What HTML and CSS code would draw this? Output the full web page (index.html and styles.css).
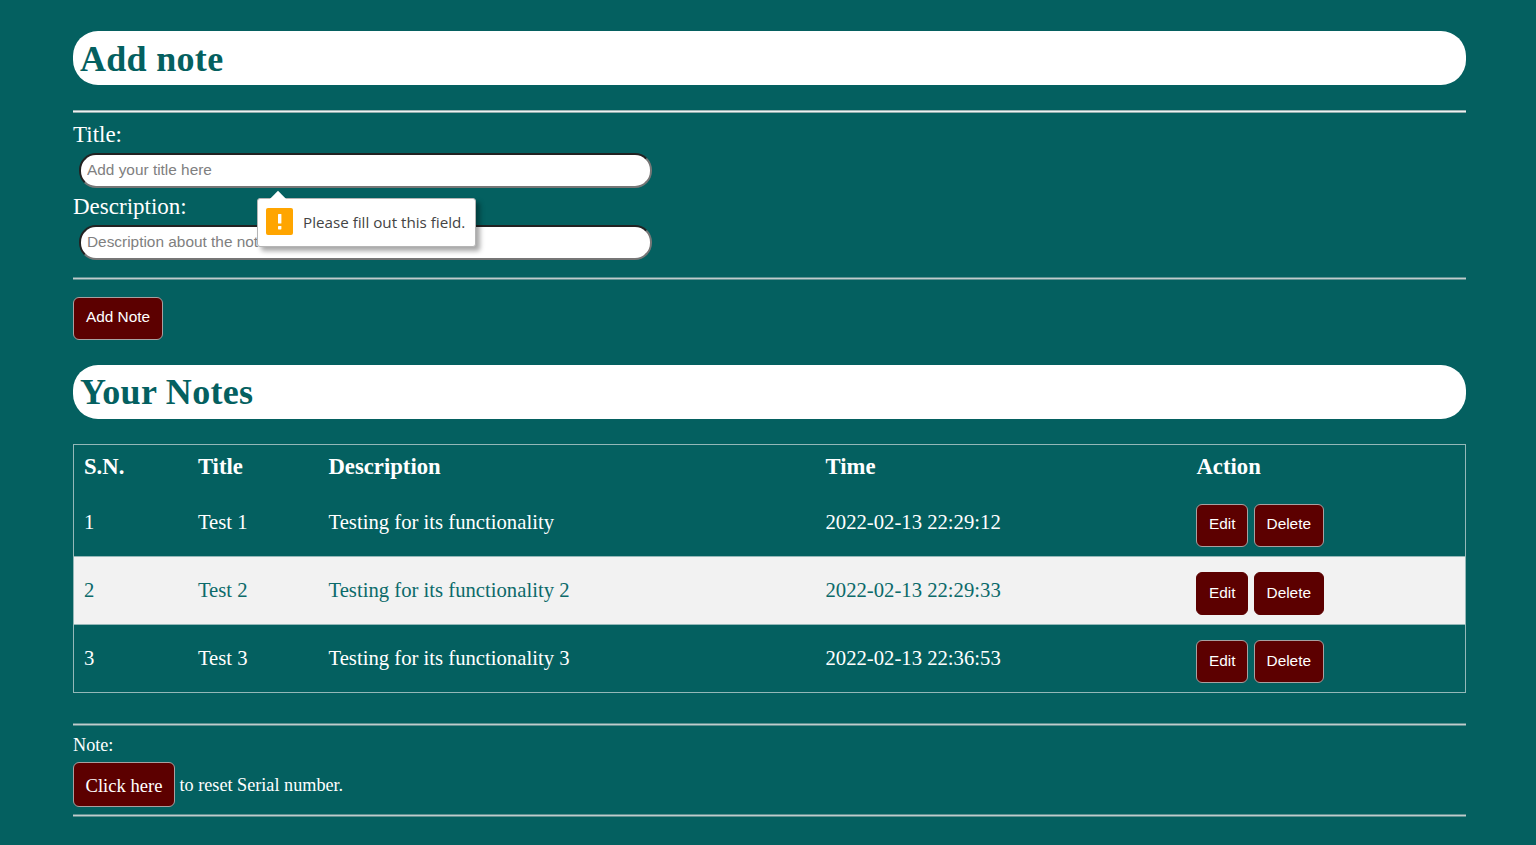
FILE: index.html
```html
<!DOCTYPE html>
<html lang="en">
<head>
<meta charset="utf-8">
<title>Notes</title>
<link rel="stylesheet" href="styles.css">
</head>
<body>
<main class="page">
  <h1 class="banner">Add note</h1>
  <hr class="rule rule-top">
  <form class="note-form">
    <label class="field-label" for="title">Title:</label>
    <div class="field-wrap">
      <input class="field" id="title" type="text" placeholder="Add your title here">
      <div class="tooltip">
        <span class="tooltip-arrow"></span>
        <svg class="tooltip-icon" width="27" height="27" viewBox="0 0 27 27" aria-hidden="true">
          <rect width="27" height="27" rx="2" fill="#ffa500"/>
          <rect x="12" y="6" width="3.4" height="9.5" rx="0.6" fill="#fff"/>
          <rect x="12" y="18" width="3.4" height="3.4" rx="0.6" fill="#fff"/>
        </svg>
        <span class="tooltip-text">Please fill out this field.</span>
      </div>
    </div>
    <label class="field-label" for="desc">Description:</label>
    <div class="field-wrap">
      <input class="field" id="desc" type="text" placeholder="Description about the note">
    </div>
    <hr class="rule rule-form">
    <button class="btn btn-add" type="button">Add Note</button>
  </form>
  <h1 class="banner banner-notes">Your Notes</h1>
  <table class="notes">
    <colgroup>
      <col class="c-sn"><col class="c-title"><col class="c-desc"><col class="c-time"><col class="c-action">
    </colgroup>
    <thead>
      <tr class="head-row"><th>S.N.</th><th>Title</th><th>Description</th><th>Time</th><th>Action</th></tr>
    </thead>
    <tbody>
      <tr><td>1</td><td>Test 1</td><td>Testing for its functionality</td><td>2022-02-13 22:29:12</td>
        <td class="actions"><button class="btn btn-row" type="button">Edit</button><button class="btn btn-row" type="button">Delete</button></td></tr>
      <tr class="alt"><td>2</td><td>Test 2</td><td>Testing for its functionality 2</td><td>2022-02-13 22:29:33</td>
        <td class="actions"><button class="btn btn-row" type="button">Edit</button><button class="btn btn-row" type="button">Delete</button></td></tr>
      <tr><td>3</td><td>Test 3</td><td>Testing for its functionality 3</td><td>2022-02-13 22:36:53</td>
        <td class="actions"><button class="btn btn-row" type="button">Edit</button><button class="btn btn-row" type="button">Delete</button></td></tr>
    </tbody>
  </table>
  <hr class="rule rule-note">
  <p class="note-label">Note:</p>
  <p class="note-line"><button class="btn btn-reset" type="button">Click here</button><span class="note-tail">to reset Serial number.</span></p>
  <hr class="rule rule-end">
</main>
</body>
</html>
```
FILE: styles.css
```css
* { box-sizing: border-box; }
html, body { margin: 0; padding: 0; }
body {
  background: #046060;
  color: #fff;
  font-family: "Liberation Serif", "Times New Roman", serif;
  height: 845px;
  overflow: hidden;
}
.page { margin: 0 70px 0 73px; padding-top: 31px; }
.banner {
  margin: 0;
  height: 54px;
  background: #fff;
  color: #046060;
  border-radius: 25px;
  padding-left: 7px;
  font-size: 36px;
  line-height: 56px;
  font-weight: 700;
  letter-spacing: 0.3px;
}
.rule {
  display: block;
  margin: 0;
  height: 3px;
  border: 0;
  border-top: 1px solid #5f9292;
  border-bottom: 1px solid #5f9292;
  background: #c0cccc;
}
.rule-top {
  margin-top: 25px;
  border-top-color: #9db3b3;
  border-bottom-color: #8fabab;
  background: #eef2f2;
}
.field-label {
  display: block;
  font-size: 23px;
  line-height: 25px;
  color: #fff;
}
.note-form { padding-top: 9px; }
.field-wrap { position: relative; margin: 6px 0 6px 6px; width: 573px; height: 35px; }
.field {
  display: block;
  width: 573px;
  height: 35px;
  padding: 0 6px 1px;
  border: 2px solid #767676;
  border-top-color: #222;
  border-left-color: #222;
  border-radius: 17px;
  background: #fff;
  font-family: "Liberation Sans", Arial, sans-serif;
  font-size: 15.4px;
  outline: 0;
}
.field::placeholder { color: #808080; opacity: 1; }
.tooltip {
  position: absolute;
  left: 178px;
  top: 45px;
  width: 219px;
  height: 49px;
  display: flex;
  align-items: center;
  background: #fff;
  border: 1px solid #b5b5b5;
  border-radius: 3px;
  box-shadow: 4px 4px 5px rgba(0, 0, 0, 0.35);
  color: #444;
  padding: 0 0 3px 8px;
  z-index: 2;
}
.tooltip-arrow {
  position: absolute;
  left: 12px;
  top: -8px;
  width: 16px;
  height: 16px;
  background: #fff;
  transform: rotate(45deg) scale(0.72);
}
.tooltip-icon { flex: none; display: block; }
.tooltip-text {
  margin: 2px 0 0 10px;
  font-family: "Open Sans", sans-serif;
  font-size: 15.2px;
  white-space: nowrap;
}
.rule-form { margin-top: 17px; }
.btn {
  background: #5c0000;
  color: #fff;
  border: 1px solid #a8a0a0;
  border-radius: 6px;
  font-family: "Liberation Sans", Arial, sans-serif;
  font-size: 15.4px;
  padding: 0 11.5px 2px;
  cursor: pointer;
}
.btn-add { display: block; margin-top: 17px; width: 90px; height: 43px; padding: 0 0 3px; }
.banner-notes { margin-top: 25px; line-height: 55px; }
.notes {
  width: 100%;
  margin-top: 25px;
  table-layout: fixed;
  border-collapse: collapse;
  border: 1px solid #94b8b8;
  font-size: 20.7px;
}
.c-sn { width: 114.4px; }
.c-title { width: 130.6px; }
.c-desc { width: 497px; }
.c-time { width: 371px; }
.head-row { height: 44px; }
.notes th { padding: 1px 10px 0; text-align: left; font-weight: 700; font-size: 22.7px; }
.notes td { padding: 0 10px; height: 68px; }
.notes tbody tr { border-bottom: 1px solid #94b8b8; }
.alt { background: #f2f2f2; color: #0c6a6a; }
.notes .actions { padding: 6px 10px 0; }
.btn-row { height: 43px; margin-right: 6px; vertical-align: middle; }
.alt .btn-row { border-color: #5c0000; }
.rule-note { margin-top: 30px; }
.note-label { margin: 9px 0 0; font-size: 18.2px; line-height: 21px; }
.note-line { margin: 6px 0 0; display: flex; align-items: center; gap: 4.5px; font-size: 18.2px; height: 45px; }
.note-tail { padding-top: 2px; }
.btn-reset {
  width: 102px;
  height: 45px;
  font-family: "Liberation Serif", "Times New Roman", serif;
  font-size: 18.6px;
  padding: 2px 0 0;
}
.rule-end { margin-top: 7px; height: 3px; }
```
